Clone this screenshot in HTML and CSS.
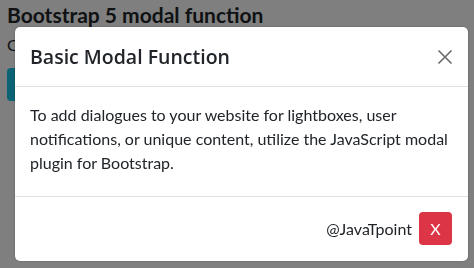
FILE: index.html
```html
<!DOCTYPE html>
<html lang="en">
<head>
<meta charset="utf-8">
<title>Bootstrap 5 modal function</title>
<link rel="stylesheet" href="styles.css">
</head>
<body>
<div class="page">
  <h2 class="page-title">Bootstrap 5 modal function</h2>
  <p class="page-text">Click on the button to open the modal.</p>
  <button class="open-btn" type="button">Open modal</button>
</div>
<div class="backdrop">
  <div class="modal">
    <div class="modal-header">
      <h5 class="modal-title">Basic Modal Function</h5>
      <button class="btn-close" type="button" aria-label="Close">
        <svg width="16" height="16" viewBox="0 0 16 16"><path d="M1.5 1.5 L14.5 14.5 M14.5 1.5 L1.5 14.5" stroke="#6a6a6a" stroke-width="1.6" fill="none"/></svg>
      </button>
    </div>
    <div class="modal-body">To add dialogues to your website for lightboxes, user notifications, or unique content, utilize the JavaScript modal plugin for Bootstrap.</div>
    <div class="modal-footer">
      <span class="credit">@JavaTpoint</span>
      <button class="btn-danger" type="button">X</button>
    </div>
  </div>
</div>
</body>
</html>
```
FILE: styles.css
```css
* { box-sizing: border-box; }
html, body { margin: 0; padding: 0; }
body {
  width: 474px;
  height: 268px;
  overflow: hidden;
  background: #fff;
  font-family: Lato, "Open Sans", sans-serif;
  color: #212529;
}
.page { padding: 0 7px; }
.page-title {
  margin: 0;
  padding-top: 1px;
  font-size: 21px;
  font-weight: 700;
  line-height: 27px;
  color: #212529;
}
.page-text {
  margin: 6px 0 12px;
  font-size: 16px;
  line-height: 22px;
}
.open-btn {
  display: block;
  height: 33px;
  padding: 0 12px;
  border: 0;
  border-radius: 4px;
  background: #17c6e6;
  color: #fff;
  font-family: inherit;
  font-size: 16px;
}
.backdrop {
  position: fixed;
  inset: 0;
  background: rgba(0, 0, 0, 0.5);
  display: flex;
  align-items: flex-start;
  padding: 27px 0 0 15px;
}
.modal {
  width: 453px;
  background: #fff;
  border-radius: 5px;
  box-shadow: 0 0 2px rgba(0, 0, 0, 0.35);
  overflow: hidden;
}
.modal-header {
  display: flex;
  align-items: center;
  justify-content: space-between;
  height: 60px;
  padding: 0 14px 0 15px;
  border-bottom: 1px solid #dee2e6;
}
.modal-title {
  margin: 0;
  font-family: "Open Sans", Lato, sans-serif;
  font-size: 19.5px;
  font-weight: 600;
  line-height: 27px;
  color: #212529;
}
.btn-close {
  width: 18px;
  height: 18px;
  padding: 1px;
  border: 0;
  background: none;
  display: flex;
  align-items: center;
  justify-content: center;
}
.modal-body {
  height: 109px;
  padding: 16px 16px 0 15px;
  font-size: 16px;
  line-height: 24px;
  color: #212529;
}
.modal-footer {
  display: flex;
  align-items: center;
  justify-content: flex-end;
  gap: 7px;
  height: 65px;
  padding: 15px 16px 16px;
  border-top: 1px solid #dee2e6;
}
.credit {
  font-size: 16px;
  line-height: 24px;
  color: #212529;
}
.btn-danger {
  width: 33px;
  height: 33px;
  padding: 0;
  border: 0;
  border-radius: 4px;
  background: #dc3545;
  color: #fff;
  font-family: inherit;
  font-size: 16px;
}
```
